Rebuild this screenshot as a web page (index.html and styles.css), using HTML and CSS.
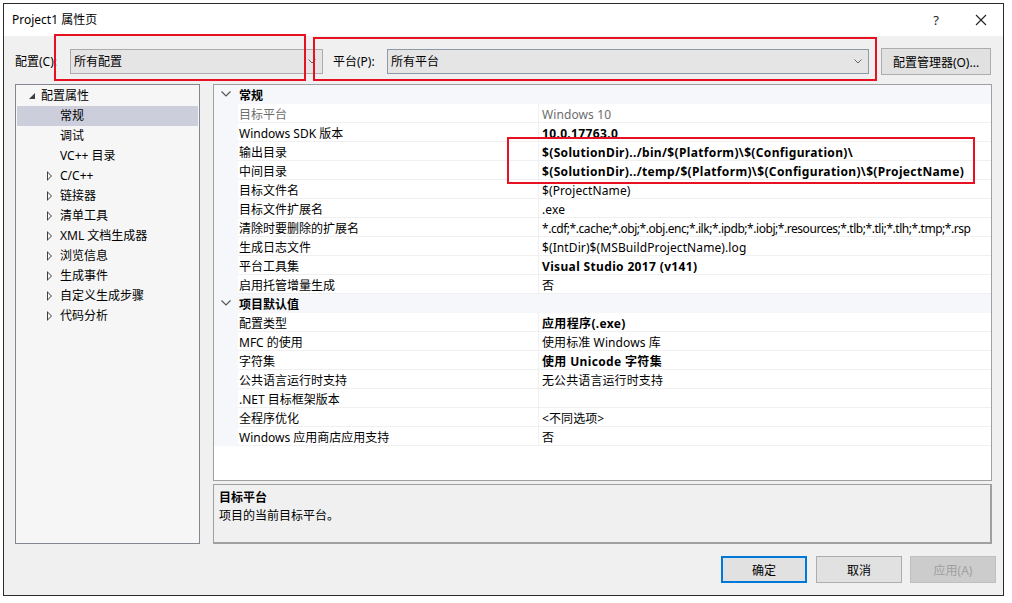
FILE: index.html
```html
<!DOCTYPE html>
<html lang="zh-CN">
<head>
    <meta charset="UTF-8">
    <title>Project1 属性页</title>
    <link rel="stylesheet" href="styles.css">
</head>
<body>
    <div class="window">
        <div class="titlebar">
            <span class="title">Project1 属性页</span>
            <span class="title-btn help">?</span>
            <span class="title-btn close">
                <svg width="12" height="12" viewBox="0 0 12 12"><path d="M1 1L11 11M11 1L1 11" stroke="#222" stroke-width="1.1"/></svg>
            </span>
        </div>

        <div class="dialog">
            <div class="config-row">
                <label class="field-label">配置(C):</label>
                <div class="combo combo-config">
                    <span>所有配置</span>
                    <svg class="combo-arrow" width="8" height="5" viewBox="0 0 8 5"><path d="M0.5 0.5L4 4L7.5 0.5" fill="none" stroke="#666"/></svg>
                </div>
                <label class="field-label platform-label">平台(P):</label>
                <div class="combo combo-platform">
                    <span>所有平台</span>
                    <svg class="combo-arrow" width="8" height="5" viewBox="0 0 8 5"><path d="M0.5 0.5L4 4L7.5 0.5" fill="none" stroke="#666"/></svg>
                </div>
                <button class="btn btn-manager">配置管理器(O)...</button>
            </div>

            <div class="main">
                <ul class="tree">
                    <li class="tree-item root"><span class="tri-open"></span>配置属性</li>
                    <li class="tree-item child selected">常规</li>
                    <li class="tree-item child">调试</li>
                    <li class="tree-item child">VC++ 目录</li>
                    <li class="tree-item child collapsed"><span class="tri-closed"></span>C/C++</li>
                    <li class="tree-item child collapsed"><span class="tri-closed"></span>链接器</li>
                    <li class="tree-item child collapsed"><span class="tri-closed"></span>清单工具</li>
                    <li class="tree-item child collapsed"><span class="tri-closed"></span>XML 文档生成器</li>
                    <li class="tree-item child collapsed"><span class="tri-closed"></span>浏览信息</li>
                    <li class="tree-item child collapsed"><span class="tri-closed"></span>生成事件</li>
                    <li class="tree-item child collapsed"><span class="tri-closed"></span>自定义生成步骤</li>
                    <li class="tree-item child collapsed"><span class="tri-closed"></span>代码分析</li>
                </ul>

                <div class="right">
                    <div class="grid">
                        <div class="category">
                            <span class="gutter"><svg width="10" height="6" viewBox="0 0 10 6"><path d="M0.5 0.5L5 5L9.5 0.5" fill="none" stroke="#555" stroke-width="1.2"/></svg></span>
                            <span class="cat-name">常规</span>
                        </div>
                        <div class="prop disabled"><span class="gutter"></span><span class="name">目标平台</span><span class="value">Windows 10</span></div>
                        <div class="prop"><span class="gutter"></span><span class="name">Windows SDK 版本</span><span class="value bold">10.0.17763.0</span></div>
                        <div class="prop"><span class="gutter"></span><span class="name">输出目录</span><span class="value bold">$(SolutionDir)../bin/$(Platform)\$(Configuration)\</span></div>
                        <div class="prop"><span class="gutter"></span><span class="name">中间目录</span><span class="value bold">$(SolutionDir)../temp/$(Platform)\$(Configuration)\$(ProjectName)</span></div>
                        <div class="prop"><span class="gutter"></span><span class="name">目标文件名</span><span class="value">$(ProjectName)</span></div>
                        <div class="prop"><span class="gutter"></span><span class="name">目标文件扩展名</span><span class="value">.exe</span></div>
                        <div class="prop"><span class="gutter"></span><span class="name">清除时要删除的扩展名</span><span class="value tight">*.cdf;*.cache;*.obj;*.obj.enc;*.ilk;*.ipdb;*.iobj;*.resources;*.tlb;*.tli;*.tlh;*.tmp;*.rsp</span></div>
                        <div class="prop"><span class="gutter"></span><span class="name">生成日志文件</span><span class="value">$(IntDir)$(MSBuildProjectName).log</span></div>
                        <div class="prop"><span class="gutter"></span><span class="name">平台工具集</span><span class="value bold">Visual Studio 2017 (v141)</span></div>
                        <div class="prop"><span class="gutter"></span><span class="name">启用托管增量生成</span><span class="value">否</span></div>
                        <div class="category">
                            <span class="gutter"><svg width="10" height="6" viewBox="0 0 10 6"><path d="M0.5 0.5L5 5L9.5 0.5" fill="none" stroke="#555" stroke-width="1.2"/></svg></span>
                            <span class="cat-name">项目默认值</span>
                        </div>
                        <div class="prop"><span class="gutter"></span><span class="name">配置类型</span><span class="value bold">应用程序(.exe)</span></div>
                        <div class="prop"><span class="gutter"></span><span class="name">MFC 的使用</span><span class="value">使用标准 Windows 库</span></div>
                        <div class="prop"><span class="gutter"></span><span class="name">字符集</span><span class="value bold">使用 Unicode 字符集</span></div>
                        <div class="prop"><span class="gutter"></span><span class="name">公共语言运行时支持</span><span class="value">无公共语言运行时支持</span></div>
                        <div class="prop"><span class="gutter"></span><span class="name">.NET 目标框架版本</span><span class="value"></span></div>
                        <div class="prop"><span class="gutter"></span><span class="name">全程序优化</span><span class="value">&lt;不同选项&gt;</span></div>
                        <div class="prop"><span class="gutter"></span><span class="name">Windows 应用商店应用支持</span><span class="value">否</span></div>
                    </div>
                    <div class="description">
                        <div class="desc-title">目标平台</div>
                        <div class="desc-text">项目的当前目标平台。</div>
                    </div>
                </div>
            </div>

            <div class="button-row">
                <button class="btn btn-ok">确定</button>
                <button class="btn">取消</button>
                <button class="btn btn-disabled">应用(A)</button>
            </div>
        </div>
    </div>

    <!-- annotation boxes drawn over the dialog -->
    <div class="mark mark-config"></div>
    <div class="mark mark-platform"></div>
    <div class="mark mark-dirs"></div>
</body>
</html>
```

FILE: styles.css
```css
/* Basic Reset */
* {
    margin: 0;
    padding: 0;
    box-sizing: border-box;
}

body {
    font-family: "Noto Sans", "Noto Sans CJK SC", sans-serif;
    font-size: 12px;
    line-height: 18px;
    color: #000;
    background: #ffffff;
    width: 1012px;
    height: 603px;
    position: relative;
    overflow: hidden;
}

/* Window */
.window {
    margin: 3px 0 0 3px;
    width: 1001px;
    height: 593px;
    border: 1px solid #2b2b2b;
    display: flex;
    flex-direction: column;
}

.titlebar {
    height: 32px;
    background: #ffffff;
    display: flex;
    align-items: center;
    padding-left: 8px;
}

.title {
    flex: 1;
    font-size: 12px;
}

.title-btn {
    width: 46px;
    text-align: center;
    display: flex;
    justify-content: center;
    align-items: center;
    height: 32px;
}

.help {
    font-size: 13px;
    color: #222;
}

.close {
    width: 44px;
}

/* Dialog body */
.dialog {
    flex: 1;
    background: #f0f0f0;
    display: flex;
    flex-direction: column;
    padding: 12px 0 0 11px;
}

.config-row {
    display: flex;
    align-items: center;
    height: 27px;
}

.field-label {
    width: 55px;
}

.platform-label {
    margin-left: 10px;
    width: 54px;
}

.combo {
    height: 25px;
    background: #e5e5e5;
    border: 1px solid #acacac;
    display: flex;
    align-items: center;
    padding-left: 3px;
    position: relative;
}

.combo span {
    flex: 1;
}

.combo-arrow {
    margin-right: 6px;
}

.combo-config {
    width: 253px;
}

.combo-platform {
    width: 482px;
    border-color: #8c9aa8;
}

.btn {
    font-family: "Noto Sans", "Noto Sans CJK SC", sans-serif;
    font-size: 12px;
    height: 27px;
    width: 86px;
    background: #e1e1e1;
    border: 1px solid #adadad;
    color: #000;
}

.btn-manager {
    width: 110px;
    margin-left: 12px;
}

/* Main area */
.main {
    display: flex;
    margin-top: 9px;
    height: 460px;
}

.tree {
    list-style: none;
    width: 185px;
    background: #f6f6f6;
    border: 1px solid #828790;
    padding: 1px;
}

.tree-item {
    height: 20px;
    line-height: 20px;
    position: relative;
    white-space: nowrap;
}

.tree-item.root {
    padding-left: 24px;
}

.tree-item.child {
    padding-left: 43px;
}

.tree-item.selected {
    background: #cccedb;
}

.tri-open {
    position: absolute;
    left: 12px;
    top: 7px;
    width: 0;
    height: 0;
    border-left: 6px solid transparent;
    border-bottom: 6px solid #404040;
}

.tri-closed {
    position: absolute;
    left: 30px;
    top: 5px;
    width: 6px;
    height: 10px;
}

.tri-closed::before {
    content: "";
    position: absolute;
    left: 0;
    top: 0;
    border-top: 5px solid transparent;
    border-bottom: 5px solid transparent;
    border-left: 5px solid #404040;
}

.tri-closed::after {
    content: "";
    position: absolute;
    left: 1px;
    top: 2px;
    border-top: 3px solid transparent;
    border-bottom: 3px solid transparent;
    border-left: 3px solid #f6f6f6;
}

.right {
    margin-left: 13px;
    width: 779px;
    display: flex;
    flex-direction: column;
}

/* Property grid */
.grid {
    height: 398px;
    background: #ffffff;
    border: 1px solid #a0a0a0;
    overflow: hidden;
}

.category,
.prop {
    display: flex;
    height: 19px;
    line-height: 16px;
}

.category {
    background: #f5f7fb;
    border-bottom: 1px solid #f5f7fb;
}

.gutter {
    width: 24px;
    flex: none;
    background: #f5f7fb;
    display: flex;
    justify-content: center;
    align-items: center;
}

.cat-name {
    font-weight: bold;
    padding: 3px 0 0 1px;
}

.prop .name {
    width: 300px;
    flex: none;
    padding: 3px 0 0 1px;
    border-bottom: 1px solid #f0f0f0;
    white-space: nowrap;
}

.prop .value {
    flex: 1;
    padding: 3px 0 0 3px;
    border-bottom: 1px solid #f0f0f0;
    border-left: 1px solid #f0f0f0;
    white-space: nowrap;
    overflow: hidden;
    letter-spacing: 0.1px;
}

.prop .value.tight {
    letter-spacing: -0.45px;
}

.prop.disabled .name,
.prop.disabled .value {
    color: #6d6d6d;
}

.prop .value.bold {
    font-weight: bold;
    letter-spacing: 0.35px;
}

/* Description */
.description {
    margin-top: 3px;
    height: 60px;
    background: #f0f0f0;
    border: 1px solid #a0a0a0;
    border-right-width: 2px;
    border-bottom-width: 2px;
    padding: 4px 5px;
}

.desc-title {
    font-weight: bold;
}

/* Buttons */
.button-row {
    display: flex;
    justify-content: flex-end;
    gap: 9px;
    margin-top: 12px;
    padding-right: 7px;
}

.btn-ok {
    border: 2px solid #0078d7;
}

.btn-disabled {
    background: #cccccc;
    border-color: #bfbfbf;
    color: #a0a0a0;
    margin-left: -1px;
}

/* Red annotation boxes */
.mark {
    position: absolute;
    border: 2px solid #e81123;
}

.mark-config {
    left: 54px;
    top: 34px;
    width: 252px;
    height: 47px;
}

.mark-platform {
    left: 313px;
    top: 37px;
    width: 564px;
    height: 44px;
}

.mark-dirs {
    left: 507px;
    top: 137px;
    width: 468px;
    height: 47px;
}
```
